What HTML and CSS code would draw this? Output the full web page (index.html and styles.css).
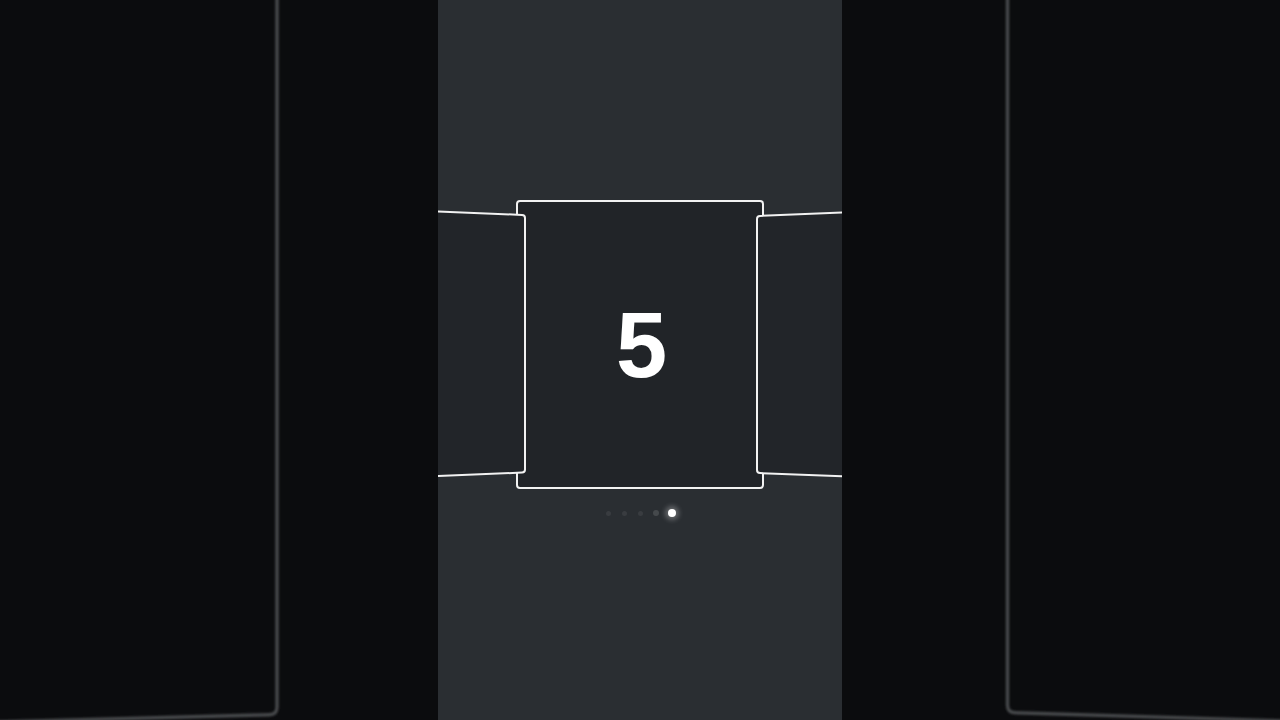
FILE: index.html
```html
<!DOCTYPE html>
<html lang="en">
<head>
<meta charset="utf-8">
<title>Carousel 5</title>
<link rel="stylesheet" href="styles.css">
</head>
<body>
<div class="screen">
  <div class="backdrop backdrop-left">
    <svg class="ghost" width="438" height="720" viewBox="0 0 438 720" aria-hidden="true">
      <defs><filter id="soft1" x="-10%" y="-10%" width="120%" height="120%"><feGaussianBlur stdDeviation="0.8"/></filter></defs>
      <path d="M277 -5 L277 707 Q277 714.5 269.5 714.7 L-5 722" fill="none" stroke="#47494c" stroke-width="3.4" filter="url(#soft1)"/>
    </svg>
  </div>

  <main class="player">
    <div class="stage">
      <svg class="side side-left" width="88" height="289" viewBox="0 0 88 289" aria-hidden="true">
        <path d="M-6 11.3 L84 14.9 Q87 15 87 18 L87 269.5 Q87 272.5 84 272.6 L-6 276.3 Z" fill="#222529" stroke="#f2f2f2" stroke-width="2"/>
      </svg>
      <div class="card"><span class="num">5</span></div>
      <svg class="side side-right" width="86" height="289" viewBox="0 0 86 289" aria-hidden="true">
        <path d="M92 12.3 L4 15.9 Q1 16 1 19 L1 270 Q1 273 4 273.1 L92 276.4 Z" fill="#222529" stroke="#f2f2f2" stroke-width="2"/>
      </svg>
    </div>
    <div class="dots">
      <span class="dot"></span>
      <span class="dot"></span>
      <span class="dot"></span>
      <span class="dot near"></span>
      <span class="dot active"></span>
    </div>
  </main>

  <div class="backdrop backdrop-right">
    <svg class="ghost" width="438" height="720" viewBox="0 0 438 720" aria-hidden="true">
      <defs><filter id="soft2" x="-10%" y="-10%" width="120%" height="120%"><feGaussianBlur stdDeviation="0.8"/></filter></defs>
      <path d="M165.5 -5 L165.5 705 Q165.5 712.5 173 712.7 L445 721" fill="none" stroke="#47494c" stroke-width="3.4" filter="url(#soft2)"/>
    </svg>
  </div>
</div>
</body>
</html>
```

FILE: styles.css
```css
* {
  box-sizing: border-box;
}

html, body {
  margin: 0;
  padding: 0;
  width: 1280px;
  height: 720px;
  overflow: hidden;
  background: #0b0c0e;
  font-family: "Liberation Sans", Arial, sans-serif;
}

.screen {
  display: grid;
  grid-template-columns: 438px 404px 438px;
  width: 1280px;
  height: 720px;
}

.backdrop {
  background: #0b0c0e;
  overflow: hidden;
}

.ghost {
  display: block;
}

.player {
  background: #2a2e32;
  overflow: hidden;
  display: flex;
  flex-direction: column;
  align-items: stretch;
  padding-top: 200px;
}

.stage {
  display: flex;
  height: 289px;
}

.side {
  display: block;
  flex: none;
  position: relative;
  z-index: 2;
}

.side-right {
  margin-left: -8px;
}

.card {
  flex: none;
  width: 248px;
  height: 289px;
  margin-left: -10px;
  border: 2px solid #f2f2f2;
  border-radius: 4px;
  background: #212428;
  display: flex;
  align-items: center;
  justify-content: center;
  position: relative;
  z-index: 1;
}

.num {
  color: #ffffff;
  font-family: "Liberation Sans", Arial, sans-serif;
  font-weight: 700;
  font-size: 92px;
  line-height: 1;
  margin-left: 3px;
}

.dots {
  display: flex;
  justify-content: center;
  margin-top: 19px;
  height: 10px;
}

.dot {
  width: 16px;
  height: 10px;
  display: flex;
  align-items: center;
  justify-content: center;
}

.dot::before {
  content: "";
  width: 5px;
  height: 5px;
  border-radius: 50%;
  background: rgba(255, 255, 255, 0.07);
}

.dot.near::before {
  background: rgba(255, 255, 255, 0.13);
  width: 6px;
  height: 6px;
}

.dot.active::before {
  width: 8px;
  height: 8px;
  background: #ffffff;
  box-shadow: 0 0 5px 3px rgba(255, 255, 255, 0.28);
}
```
